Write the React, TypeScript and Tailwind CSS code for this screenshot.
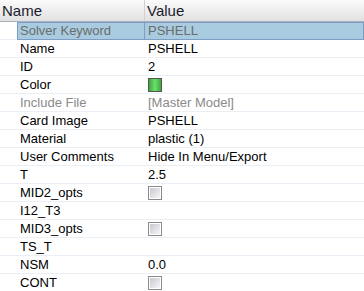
import React from 'react';

type Row = {
  name: string;
  value?: string;
  kind?: 'text' | 'color' | 'check';
  dim?: boolean;
};

const ROWS: Row[] = [
  { name: 'Name', value: 'PSHELL' },
  { name: 'ID', value: '2' },
  { name: 'Color', kind: 'color' },
  { name: 'Include File', value: '[Master Model]', dim: true },
  { name: 'Card Image', value: 'PSHELL' },
  { name: 'Material', value: 'plastic (1)' },
  { name: 'User Comments', value: 'Hide In Menu/Export' },
  { name: 'T', value: '2.5' },
  { name: 'MID2_opts', kind: 'check' },
  { name: 'I12_T3' },
  { name: 'MID3_opts', kind: 'check' },
  { name: 'TS_T' },
  { name: 'NSM', value: '0.0' },
  { name: 'CONT', kind: 'check' },
];

const ColorSwatch = () => (
  <span className="block w-[14px] h-[14px] border border-[#555] bg-gradient-to-r from-[#3aa83a] via-[#6ee06e] to-[#3aa83a]" />
);

const CheckBox = () => (
  <span className="block w-[14px] h-[14px] border border-[#8a8a8a] p-[1px] bg-white">
    <span className="block w-full h-full bg-gradient-to-br from-[#c8c8d0] to-[#f6f6f8]" />
  </span>
);

export default function App() {
  return (
    <div className="w-[364px] h-[291px] overflow-hidden bg-white text-[13px] text-black" style={{ fontFamily: '"Liberation Sans", Arial, sans-serif' }}>
      {/* en-tête */}
      <div className="flex h-[22px] border-b border-[#a9b1ba] bg-gradient-to-b from-[#fbfbfb] to-[#e1e1e1] text-[15px] leading-[21px] text-[#1b1b2e]">
        <div className="w-[145px] pl-[2px] border-r border-[#d0d0d0]">Name</div>
        <div className="flex-1 pl-[2px]">Value</div>
      </div>

      {/* ligne sélectionnée */}
      <div className="flex h-[18px]">
        <div className="w-[17px] border-b border-[#e9eff5]" />
        <div className="w-[128px] h-[18px] border border-[#7d9cc6] bg-[#a9cbdf] pl-[2px] leading-[16px] text-[#6b6b6b]">Solver Keyword</div>
        <div className="flex-1 h-[18px] border border-l-0 border-[#7d9cc6] bg-[#a9cbdf] pl-[3px] leading-[16px] text-[#6b6b6b]">PSHELL</div>
      </div>

      {ROWS.map((r) => (
        <div key={r.name} className="flex h-[18px] border-b border-[#e9eff5] leading-[17px]">
          <div className={`w-[148px] pl-[20px] ${r.dim ? 'text-[#8a8a8a]' : ''}`}>{r.name}</div>
          <div className={`flex-1 flex items-center ${r.dim ? 'text-[#8a8a8a]' : ''}`}>
            {r.kind === 'color' && <ColorSwatch />}
            {r.kind === 'check' && <CheckBox />}
            {(!r.kind || r.kind === 'text') && r.value && <span>{r.value}</span>}
          </div>
        </div>
      ))}
    </div>
  );
}
